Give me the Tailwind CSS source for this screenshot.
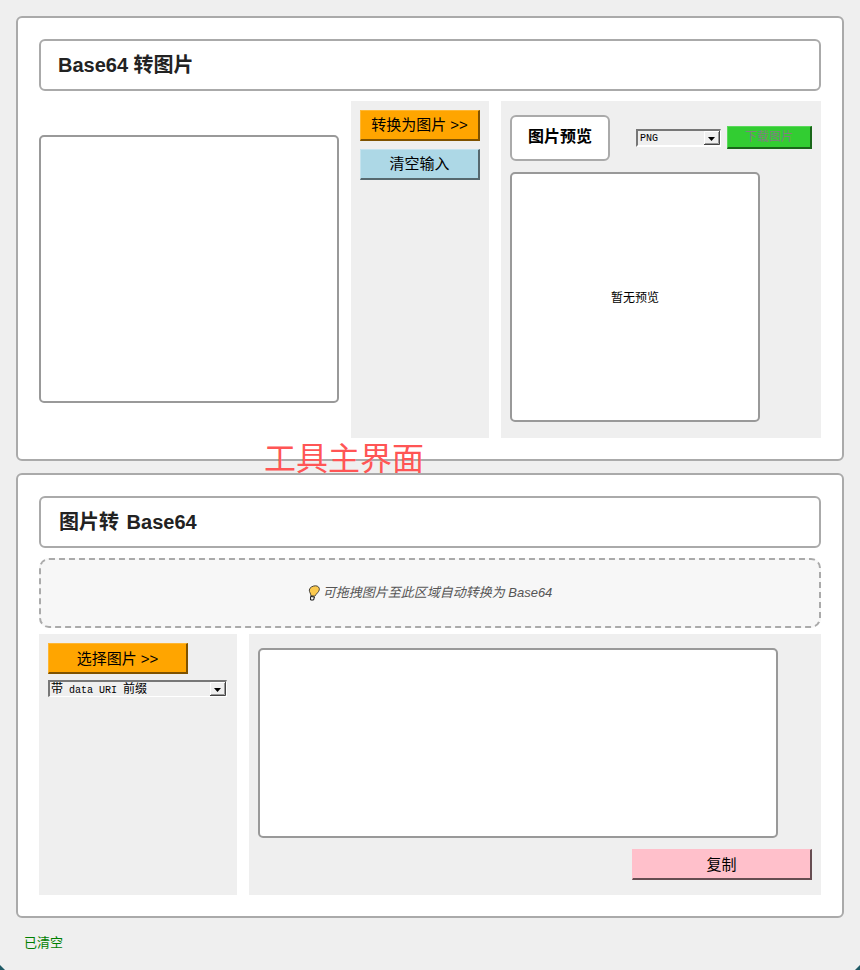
<!DOCTYPE html>
<html lang="zh">
<head>
<meta charset="utf-8">
<title>Base64</title>
<script src="https://cdn.jsdelivr.net/npm/@tailwindcss/browser@4"></script>
</head>
<body class="relative h-[970px] w-[860px] overflow-hidden bg-[#efefef] font-['Liberation_Sans','Noto_Sans_CJK_SC',sans-serif] text-black">
<div class="flex flex-col px-4 pt-4">

  <section class="mb-3 h-[445px] rounded-[6px] border-2 border-[#aaaaaa] bg-white p-[21px]">
    <div class="flex h-[52px] items-center rounded-[6px] border-2 border-[#aaaaaa] pl-[17px] text-[20px] leading-none font-bold text-[#222222]">Base64 转图片</div>
    <div class="mt-[10px] flex h-[337px] gap-3">
      <div class="flex w-[300px] flex-col pt-[34px]">
        <textarea class="h-[268px] w-[300px] resize-none rounded-[5px] border-2 border-[#999999] bg-white"></textarea>
      </div>
      <div class="flex w-[138px] flex-col gap-[8px] bg-[#efefef] p-[9px]">
        <button class="h-[31px] w-[120px] border-r-2 border-b-2 border-t border-l border-t-[#ffb733] border-l-[#ffb733] border-r-[#7f5200] border-b-[#7f5200] bg-[#ffa500] pb-[2px] text-[15px] leading-none">转换为图片 &gt;&gt;</button>
        <button class="h-[31px] w-[120px] border-r-2 border-b-2 border-t border-l border-t-[#c5e3ee] border-l-[#c5e3ee] border-r-[#56696f] border-b-[#56696f] bg-[#add8e6] pb-[2px] text-[15px] leading-none">清空输入</button>
      </div>
      <div class="w-[320px] bg-[#efefef] px-[9px] pt-[14px]">
        <div class="flex items-center">
          <div class="flex h-[46px] w-[100px] items-center justify-center rounded-[6px] border-2 border-[#aaaaaa] bg-white pb-[2px] text-[16px] font-bold">图片预览</div>
          <div class="relative ml-[26px] h-[18px] w-[85px] border-t-2 border-l-2 border-r border-b-2 border-b-white border-r-white border-t-[#777777] border-l-[#777777] bg-[#efefef]">
            <span class="block pl-[2px] font-['Liberation_Mono',monospace] text-[10px] leading-[15px]">PNG</span>
            <svg class="absolute top-0 right-0 h-[14px] w-[16px]" viewBox="0 0 16 14"><rect width="16" height="14" fill="#efefef"/><path d="M0.500 13.500V0.500H15.500" fill="none" stroke="#ffffff"/><path d="M0 13.500H15.500V0" fill="none" stroke="#444444"/><path d="M14.500 1V12.500H1" fill="none" stroke="#999999"/><path d="M4 6h7l-3.500 4z" fill="#000000"/></svg>
          </div>
          <button class="mb-[2px] ml-[6px] h-[23px] w-[85px] border-r-2 border-b-2 border-t border-l border-t-[#5ad95a] border-l-[#5ad95a] border-r-[#196619] border-b-[#196619] bg-[#32cd32] text-[12px] leading-none text-[#808080]">下载图片</button>
        </div>
        <div class="mt-[11px] flex h-[250px] w-[250px] items-center justify-center rounded-[5px] border-2 border-[#999999] bg-white pt-[2px] text-[12px]">暂无预览</div>
      </div>
    </div>
  </section>

  <section class="h-[445px] rounded-[6px] border-2 border-[#aaaaaa] bg-white p-[21px]">
    <div class="flex h-[52px] items-center rounded-[6px] border-2 border-[#aaaaaa] pl-[18px] text-[20px] leading-none font-bold text-[#222222]">图片转&nbsp;<span class="ml-[2px]">Base64</span></div>
    <div class="mt-[10px] flex h-[70px] items-center justify-center gap-[3px] rounded-[10px] border-2 border-dashed border-[#aaaaaa] bg-[#f7f7f7] text-[13px] text-[#555555] italic">
      <svg class="h-[16px] w-[12px]" viewBox="0 0 12 16"><path d="M7.500 0.800C10 0.800 11.700 2.600 11.300 4.800 10.900 7 8.500 8.400 6.800 11.200L2.800 10.700C3 8.400 1.200 7.400 1.300 5 1.500 2.500 4.800 0.800 7.500 0.800Z" fill="#fbc94e" stroke="#333333" stroke-width="0.900"/><path d="M2.600 11.500l3.800 .5-.8 3h-3z" fill="#ffffff" stroke="#111111" stroke-width="1"/></svg>
      <span>可拖拽图片至此区域自动转换为 Base64</span>
    </div>
    <div class="mt-[6px] flex h-[261px] gap-3">
      <div class="flex w-[198px] flex-col gap-[6px] bg-[#efefef] px-[9px] pt-[9px]">
        <button class="h-[31px] w-[140px] border-r-2 border-b-2 border-t border-l border-t-[#ffb733] border-l-[#ffb733] border-r-[#7f5200] border-b-[#7f5200] bg-[#ffa500] text-[15px] leading-none">选择图片 &gt;&gt;</button>
        <div class="relative h-[17px] w-[179px] border-t-2 border-l-2 border-r border-b border-b-white border-r-white border-t-[#777777] border-l-[#777777] bg-[#efefef]">
          <span class="block pt-[1px] pl-[1px] font-['Liberation_Mono','Noto_Sans_CJK_SC',monospace] text-[10px] leading-[14px] whitespace-nowrap"><span class="text-[12px]">带</span> data URI <span class="text-[12px]">前缀</span></span>
          <svg class="absolute top-0 right-0 h-[14px] w-[16px]" viewBox="0 0 16 14"><rect width="16" height="14" fill="#efefef"/><path d="M0.500 13.500V0.500H15.500" fill="none" stroke="#ffffff"/><path d="M0 13.500H15.500V0" fill="none" stroke="#444444"/><path d="M14.500 1V12.500H1" fill="none" stroke="#999999"/><path d="M4 6h7l-3.500 4z" fill="#000000"/></svg>
        </div>
      </div>
      <div class="flex w-[572px] flex-col bg-[#efefef] px-[9px] pt-[14px]">
        <textarea class="h-[190px] w-[520px] resize-none rounded-[5px] border-2 border-[#999999] bg-white"></textarea>
        <div class="mt-[11px] flex justify-end">
          <button class="h-[31px] w-[180px] border-r-2 border-b-2 border-t border-l border-t-[#ffc0cb] border-l-[#ffc0cb] border-r-[#664d51] border-b-[#664d51] bg-[#ffc0cb] text-[15px] leading-none">复制</button>
        </div>
      </div>
    </div>
  </section>

  <p class="mt-[16px] pl-2 text-[13px] leading-[18px] text-[#008000]">已清空</p>
</div>

<div class="absolute top-[439px] left-[264px] text-[32px] leading-[40px] whitespace-nowrap text-[#ff5555]">工具主界面</div>
<svg class="absolute bottom-0 left-0 h-[5px] w-[5px]" viewBox="0 0 5 5"><path d="M0 0L5 5H0Z" fill="#1f5a66"/></svg>
<svg class="absolute right-0 bottom-0 h-[5px] w-[5px]" viewBox="0 0 5 5"><path d="M5 0L0 5H5Z" fill="#1f5a66"/></svg>
</body>
</html>
